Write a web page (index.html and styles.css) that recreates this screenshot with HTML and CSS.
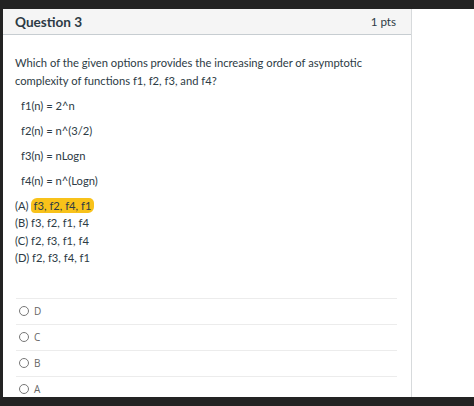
FILE: index.html
```html
<!DOCTYPE html>
<html lang="en">
<head>
  <meta charset="UTF-8" />
  <title>Question 3</title>
  <link rel="stylesheet" href="styles.css">
</head>
<body>
  <div class="frame">
    <div class="card">
      <div class="header">
        <span class="title">Question 3</span>
        <span class="pts">1 pts</span>
      </div>

      <div class="content">
        <p class="question">Which of the given options provides the increasing order of asymptotic complexity of functions f1, f2, f3, and f4?</p>
        <p class="fn">f1(n) = 2^n</p>
        <p class="fn">f2(n) = n^(3/2)</p>
        <p class="fn">f3(n) = nLogn</p>
        <p class="fn">f4(n) = n^(Logn)</p>

        <div class="options">
          <div>(A)<span class="mark">f3, f2, f4, f1</span></div>
          <div>(B) f3, f2, f1, f4</div>
          <div>(C) f2, f3, f1, f4</div>
          <div>(D) f2, f3, f4, f1</div>
        </div>
      </div>

      <div class="answers">
        <label class="answer"><span class="radio"></span>D</label>
        <label class="answer"><span class="radio"></span>C</label>
        <label class="answer"><span class="radio"></span>B</label>
        <label class="answer"><span class="radio"></span>A</label>
      </div>
    </div>
  </div>
</body>
</html>
```

FILE: styles.css
```css
body {
  margin: 0;
  padding: 0;
  background-color: #232323;
  font-family: 'Lato', sans-serif;
  color: #2d3b45;
}

.frame {
  margin: 9px 0 0 3px;
  height: 388px;
  background-color: #fff;
  overflow: hidden;
}

.card {
  width: 408px;
  height: 100%;
  border-right: 1px solid #d7dadc;
}

.header {
  height: 25px;
  background-color: #f5f5f5;
  border-bottom: 1px solid #c7cdd1;
  display: flex;
  justify-content: space-between;
  align-items: center;
  padding: 0 15px 0 12px;
}

.title {
  font-size: 13.6px;
  font-weight: bold;
  color: #2d3b45;
}

.pts {
  font-size: 11.6px;
  color: #2d3b45;
}

.content {
  padding: 19px 12px 0 12px;
  font-size: 11.2px;
}

.content p {
  margin: 0 0 7px 0;
  line-height: 18px;
}

.fn {
  padding-left: 6px;
}

.options {
  margin-top: 6px;
  line-height: 17.4px;
}

.mark {
  background-color: #f8c21a;
  border-radius: 6px 5px 6px 4px;
  padding: 1px 3px 1px 3px;
  margin-left: 2px;
}

.answers {
  margin: 31px 14px 0 13px;
}

.answer {
  display: flex;
  align-items: center;
  height: 25px;
  border-top: 1px solid #ececec;
  font-family: 'Open Sans', sans-serif;
  font-size: 10px;
  color: #666;
  gap: 5px;
  padding-left: 3px;
}

.radio {
  width: 8px;
  height: 8px;
  border: 1.5px solid #777;
  border-radius: 50%;
}
```
